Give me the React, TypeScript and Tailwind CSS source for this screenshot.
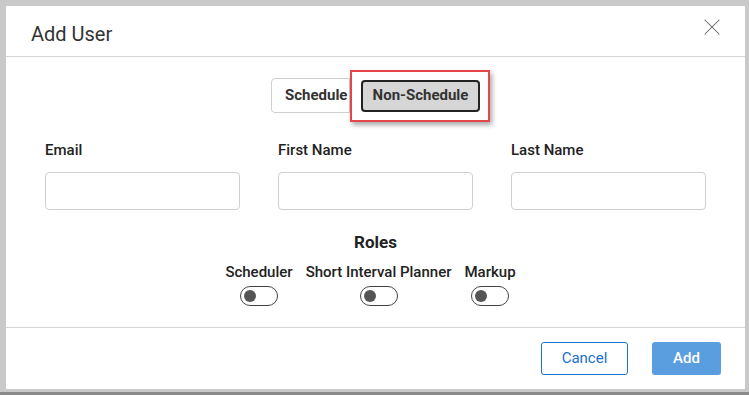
import { X } from 'lucide-react';

const FIELDS = ['Email', 'First Name', 'Last Name'];
const ROLES = ['Scheduler', 'Short Interval Planner', 'Markup'];

function Toggle() {
  return (
    <span className="flex h-[20px] w-[38px] items-center rounded-full border border-[#444] bg-white px-[3px]">
      <span className="h-[12px] w-[12px] rounded-full bg-[#555]" />
    </span>
  );
}

export default function App() {
  return (
    <div
      className="h-[395px] w-[749px] overflow-hidden bg-[#c9c9c9]"
      style={{ fontFamily: 'Roboto, "Liberation Sans", sans-serif' }}
    >
      <div className="ml-[6px] mt-[6px] flex h-[383px] w-[739px] flex-col bg-white">
        {/* Header */}
        <div className="flex h-[51px] shrink-0 items-center justify-between border-b border-[#d4d4d4] pl-[25px] pr-[19px]">
          <h1 className="mt-[5px] text-[20px] font-normal text-[#333]">Add User</h1>
          <X className="-mt-[8px] h-[28px] w-[28px] text-[#666]" strokeWidth={0.9} />
        </div>

        {/* Body */}
        <div className="flex flex-1 flex-col items-center pt-[21px]">
          <div className="flex items-center gap-[11px]">
            <button className="h-[35px] w-[79px] rounded-l-[4px] border border-[#cfcfcf] bg-white pl-[13px] text-left text-[15px] font-bold text-[#333]">
              Schedule
            </button>
            <span className="relative">
              <button className="h-[32px] w-[119px] rounded-[4px] border-2 border-[#222] bg-[#d6d6d6] text-[15px] font-bold text-[#333]">
                Non-Schedule
              </button>
              <span className="pointer-events-none absolute -bottom-[10px] -left-[11px] -right-[10px] -top-[10px] border-2 border-[#e5464a] shadow-[2px_3px_5px_rgba(0,0,0,0.35)]" />
            </span>
          </div>

          <div className="mt-[28px] grid w-full grid-cols-3 gap-[38px] px-[39px]">
            {FIELDS.map((f) => (
              <div key={f} className="flex flex-col">
                <label className="text-[15px] font-medium leading-[18px] text-[#222]">{f}</label>
                <input className="mt-[13px] h-[38px] w-full rounded-[4px] border border-[#cfcfcf]" />
              </div>
            ))}
          </div>

          <h2 className="mt-[21px] text-[17px] font-bold leading-[22px] text-[#222]">Roles</h2>
          <div className="mr-[10px] mt-[10px] flex gap-[13px]">
            {ROLES.map((r) => (
              <div key={r} className="flex flex-col items-center">
                <span className="text-[15px] font-medium leading-[18px] text-[#222]">{r}</span>
                <span className="mt-[5px]">
                  <Toggle />
                </span>
              </div>
            ))}
          </div>
        </div>

        {/* Footer */}
        <div className="flex h-[62px] shrink-0 items-center justify-end gap-[24px] border-t border-[#d4d4d4] pr-[24px]">
          <button className="h-[33px] w-[87px] rounded-[3px] border border-[#1a6fd0] bg-white text-[15px] text-[#1a6fd0]">
            Cancel
          </button>
          <button className="h-[33px] w-[69px] rounded-[3px] bg-[#5b9ee0] text-[15px] font-medium text-white">
            Add
          </button>
        </div>
      </div>
      <div className="mt-[3px] h-[3px] w-full bg-[#8a8a8a]" />
    </div>
  );
}
